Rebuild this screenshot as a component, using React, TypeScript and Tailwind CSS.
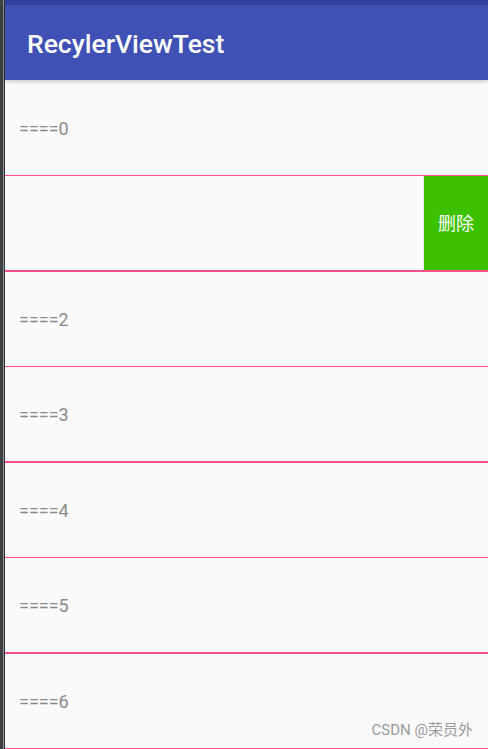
import React from 'react';

const items = ['====0', '', '====2', '====3', '====4', '====5', '====6'];

function Row({ label, swiped }: { label: string; swiped?: boolean }) {
  return (
    <div className="flex flex-col">
      <div className="flex h-[94px] items-center">
        <div className="flex h-full flex-1 items-center pl-[14px] pt-[1px] text-[18px] text-[#8a8a8a]">
          {label}
        </div>
        {swiped && (
          <div className="flex h-full w-[65px] items-center justify-center border-l border-[#e8e8e8] bg-[#3bc100] text-[18px] text-white">
            删除
          </div>
        )}
      </div>
      <div className="h-[1.5px] bg-[#ff4f86]" />
    </div>
  );
}

export default function App() {
  return (
    <div
      className="flex h-[749px] w-[488px] overflow-hidden bg-[#fafafa]"
      style={{ fontFamily: 'Roboto, "Noto Sans CJK SC", sans-serif' }}
    >
      <div className="flex h-full w-[5px] shrink-0">
        <div className="w-[3px] bg-[#3d4043]" />
        <div className="w-[1px] bg-[#8d9092]" />
        <div className="w-[1px] bg-[#2e3032]" />
      </div>
      <div className="relative flex flex-1 flex-col">
        <div className="h-[5px] bg-[#303f9f]" />
        <div className="relative z-10 flex h-[75px] items-center bg-[#3f51b5] pl-[22px] pt-[3px] shadow-[0_2px_4px_rgba(0,0,0,0.18)]">
          <span className="text-[26.5px] font-medium text-white">RecylerViewTest</span>
        </div>
        <div className="flex flex-col pt-[1px]">
          {items.map((label, i) => (
            <Row key={i} label={label} swiped={i === 1} />
          ))}
        </div>
        <div className="absolute bottom-[8px] right-[15px] text-[15px] text-[#9a9a9a]">
          CSDN @荣员外
        </div>
      </div>
    </div>
  );
}
